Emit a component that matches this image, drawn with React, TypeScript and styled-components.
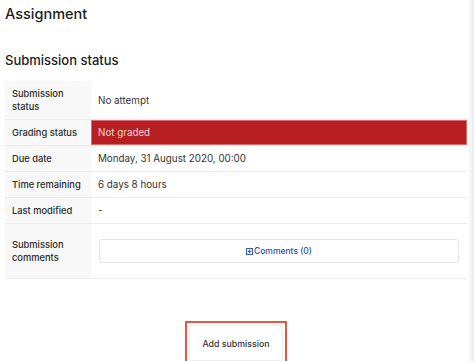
import React from "react";
import styled, { createGlobalStyle } from "styled-components";

const GlobalStyle = createGlobalStyle`
  html, body {
    margin: 0;
    padding: 0;
    background: #ffffff;
  }
  body {
    font-family: "Inter", "Noto Sans", sans-serif;
    color: #1d2125;
  }
`;

const Page = styled.div`
  display: flex;
  width: 474px;
  height: 361px;
  overflow: hidden;
`;

const Main = styled.div`
  flex: 1;
  padding: 0 0 0 5px;
  display: flex;
  flex-direction: column;
`;

const Edge = styled.div`
  width: 8px;
  background: linear-gradient(to right, #ffffff, #ececec);
`;

const Title = styled.h2`
  margin: 4px 0 0;
  font-size: 14.5px;
  font-weight: 500;
  line-height: 20px;
`;

const SubTitle = styled.h3`
  margin: 27px 0 0;
  font-size: 13px;
  font-weight: 500;
  line-height: 18px;
`;

const Table = styled.table`
  margin-top: 12px;
  width: 462px;
  border-collapse: collapse;
  font-size: 9.8px;
  line-height: 13px;
`;

const Row = styled.tr`
  border-bottom: 1px solid #ececec;
`;

const Label = styled.th`
  width: 72px;
  padding: 6px 7px;
  background: #f8f8f8;
  text-align: left;
  font-weight: 500;
  font-size: 9.3px;
  color: #2a2a2a;
`;

const Value = styled.td<{ $alert?: boolean }>`
  padding: 6px 7px;
  vertical-align: middle;
  color: ${(p) => (p.$alert ? "#f6d6d6" : "#333")};
  background: ${(p) => (p.$alert ? "#b71f22" : "transparent")};
  box-shadow: ${(p) => (p.$alert ? "inset 0 0 0 1px #d86a6a" : "none")};
`;

const CommentsBox = styled.div`
  margin: 9px 1px;
  height: 22px;
  border: 1px solid #e6e6e6;
  border-radius: 3px;
  display: flex;
  align-items: center;
  justify-content: center;
  color: #2a4fa8;
  font-size: 8.5px;
  font-weight: 500;
  gap: 1px;
`;

const PlusIcon = styled.svg`
  width: 7px;
  height: 7px;
`;

const Actions = styled.div`
  display: flex;
  justify-content: center;
  margin-top: 42px;
`;

const Highlight = styled.div`
  border: 2px solid #e9553b;
  padding: 2px;
`;

const Button = styled.button`
  width: 94px;
  height: 36px;
  border: 1px solid #eeeeee;
  border-radius: 3px;
  background: #ffffff;
  font-family: inherit;
  font-size: 8.8px;
  font-weight: 500;
  color: #333;
`;

const rows: [string, string][] = [
  ["Due date", "Monday, 31 August 2020, 00:00"],
  ["Time remaining", "6 days 8 hours"],
  ["Last modified", "-"],
];

export default function App() {
  return (
    <>
      <GlobalStyle />
      <Page>
        <Main>
          <Title>Assignment</Title>
          <SubTitle>Submission status</SubTitle>
          <Table>
            <tbody>
              <Row>
                <Label>Submission status</Label>
                <Value>No attempt</Value>
              </Row>
              <Row>
                <Label>Grading status</Label>
                <Value $alert>Not graded</Value>
              </Row>
              {rows.map(([k, v]) => (
                <Row key={k}>
                  <Label>{k}</Label>
                  <Value>{v}</Value>
                </Row>
              ))}
              <Row>
                <Label>Submission comments</Label>
                <Value>
                  <CommentsBox>
                    <PlusIcon viewBox="0 0 8 8">
                      <rect x="0.5" y="0.5" width="7" height="7" fill="#dfe6f5" stroke="#2a4fa8" />
                      <path d="M4 2v4M2 4h4" stroke="#2a4fa8" strokeWidth="1" />
                    </PlusIcon>
                    Comments (0)
                  </CommentsBox>
                </Value>
              </Row>
            </tbody>
          </Table>
          <Actions>
            <Highlight>
              <Button>Add submission</Button>
            </Highlight>
          </Actions>
        </Main>
        <Edge />
      </Page>
    </>
  );
}
